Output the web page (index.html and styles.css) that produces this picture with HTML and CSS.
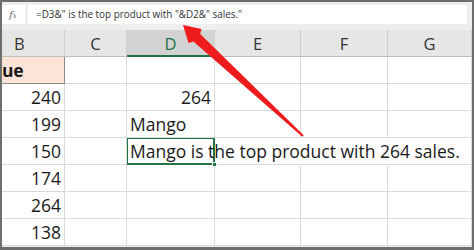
FILE: index.html
```html
<!DOCTYPE html>
<html>
<head>
<meta charset="utf-8">
<link rel="stylesheet" href="styles.css">
</head>
<body>
<div class="frame">
  <div class="fbar">
    <div class="fx">f<span class="x">x</span></div>
    <div class="formula">=D3&amp;" is the top product with "&amp;D2&amp;" sales."</div>
  </div>
  <div class="grid">
    <div class="hd hb">B</div>
    <div class="hd">C</div>
    <div class="hd sel">D</div>
    <div class="hd">E</div>
    <div class="hd">F</div>
    <div class="hd">G</div>

    <div class="c peach">ue</div><div class="c"></div><div class="c"></div><div class="c"></div><div class="c"></div><div class="c"></div>
    <div class="c num">240</div><div class="c"></div><div class="c num">264</div><div class="c"></div><div class="c"></div><div class="c"></div>
    <div class="c num">199</div><div class="c"></div><div class="c txt">Mango</div><div class="c"></div><div class="c"></div><div class="c"></div>
    <div class="c num">150</div><div class="c"></div><div class="c txt active"><span class="over">Mango is the top product with 264 sales.</span><span class="handle"></span></div><div class="c nb"></div><div class="c nb"></div><div class="c"></div>
    <div class="c num">174</div><div class="c"></div><div class="c"></div><div class="c"></div><div class="c"></div><div class="c"></div>
    <div class="c num">264</div><div class="c"></div><div class="c"></div><div class="c"></div><div class="c"></div><div class="c"></div>
    <div class="c num">138</div><div class="c"></div><div class="c"></div><div class="c"></div><div class="c"></div><div class="c"></div>
  </div>
  <svg class="arrow" width="474" height="250" viewBox="0 0 474 250">
    <polygon fill="#ee1c1c" points="183,25 201.5,29 200.2,34 303.7,135.3 302.3,136.7 193.4,41.6 188.5,43"/>
  </svg>
</div>
</body>
</html>
```

FILE: styles.css
```css
* { box-sizing: border-box; }
html, body { margin: 0; padding: 0; }
body { width: 474px; height: 250px; overflow: hidden; background: #fff; }

.frame {
  position: relative;
  width: 474px;
  height: 250px;
  border-top: 2px solid #6e6e6e;
  border-left: 2px solid #6e6e6e;
  border-right: 2px solid #6e6e6e;
  border-bottom: 3px solid #6e6e6e;
  background: #eeeeee;
  font-family: "Open Sans", "Noto Sans", sans-serif;
  color: #222;
}

.fbar {
  display: flex;
  gap: 3px;
  height: 28px;
  padding: 3px 5px 6px 0;
}
.fx {
  width: 23px;
  background: #fff;
  font-family: "DejaVu Serif", serif;
  font-style: italic;
  font-size: 10px;
  color: #666;
  padding-left: 7px;
  line-height: 19px;
}
.fx .x { font-size: 7px; }
.formula {
  flex: 1;
  background: #fff;
  font-size: 9.9px;
  line-height: 19px;
  padding-left: 8px;
  color: #333;
  white-space: nowrap;
}

.grid {
  display: grid;
  grid-template-columns: 63px 62px 88px 86px 87px 84px;
  grid-auto-rows: 27px;
  background: #fff;
}
.hd {
  background: #e6e6e6;
  border-right: 1px solid #cfcfcf;
  border-bottom: 1px solid #bdbdbd;
  font-size: 16.5px;
  color: #333;
  text-align: center;
  line-height: 27px;
}
.hd.hb { text-align: left; padding-left: 12px; }
.hd.sel {
  background: #d3d3d3;
  color: #217346;
  border-bottom: 2px solid #217346;
}

.c {
  border-right: 1px solid #dadada;
  border-bottom: 1px solid #dadada;
  font-size: 17.5px;
  line-height: 1;
  display: flex;
  align-items: flex-end;
  padding: 0 3px 4px 3px;
  white-space: nowrap;
  color: #1a1a1a;
}
.c.num { justify-content: flex-end; }
.c.peach {
  background: #fce4d6;
  border-right: 1px solid #8c8c8c;
  border-bottom: 1px solid #8c8c8c;
  font-weight: bold;
  padding-left: 0;
  letter-spacing: -0.3px;
}
.c.nb { border-right-color: transparent; }
.c.active {
  position: relative;
  overflow: visible;
  box-shadow: inset 0 0 0 1px #217346;
  border-right-color: #217346;
  border-bottom-color: #217346;
}
.over { position: relative; z-index: 2; }
.handle {
  position: absolute;
  right: -3px;
  bottom: -3px;
  width: 5px;
  height: 5px;
  background: #217346;
  border: 1px solid #fff;
  z-index: 3;
}

.arrow {
  position: absolute;
  left: -2px;
  top: -2px;
  pointer-events: none;
}
```
